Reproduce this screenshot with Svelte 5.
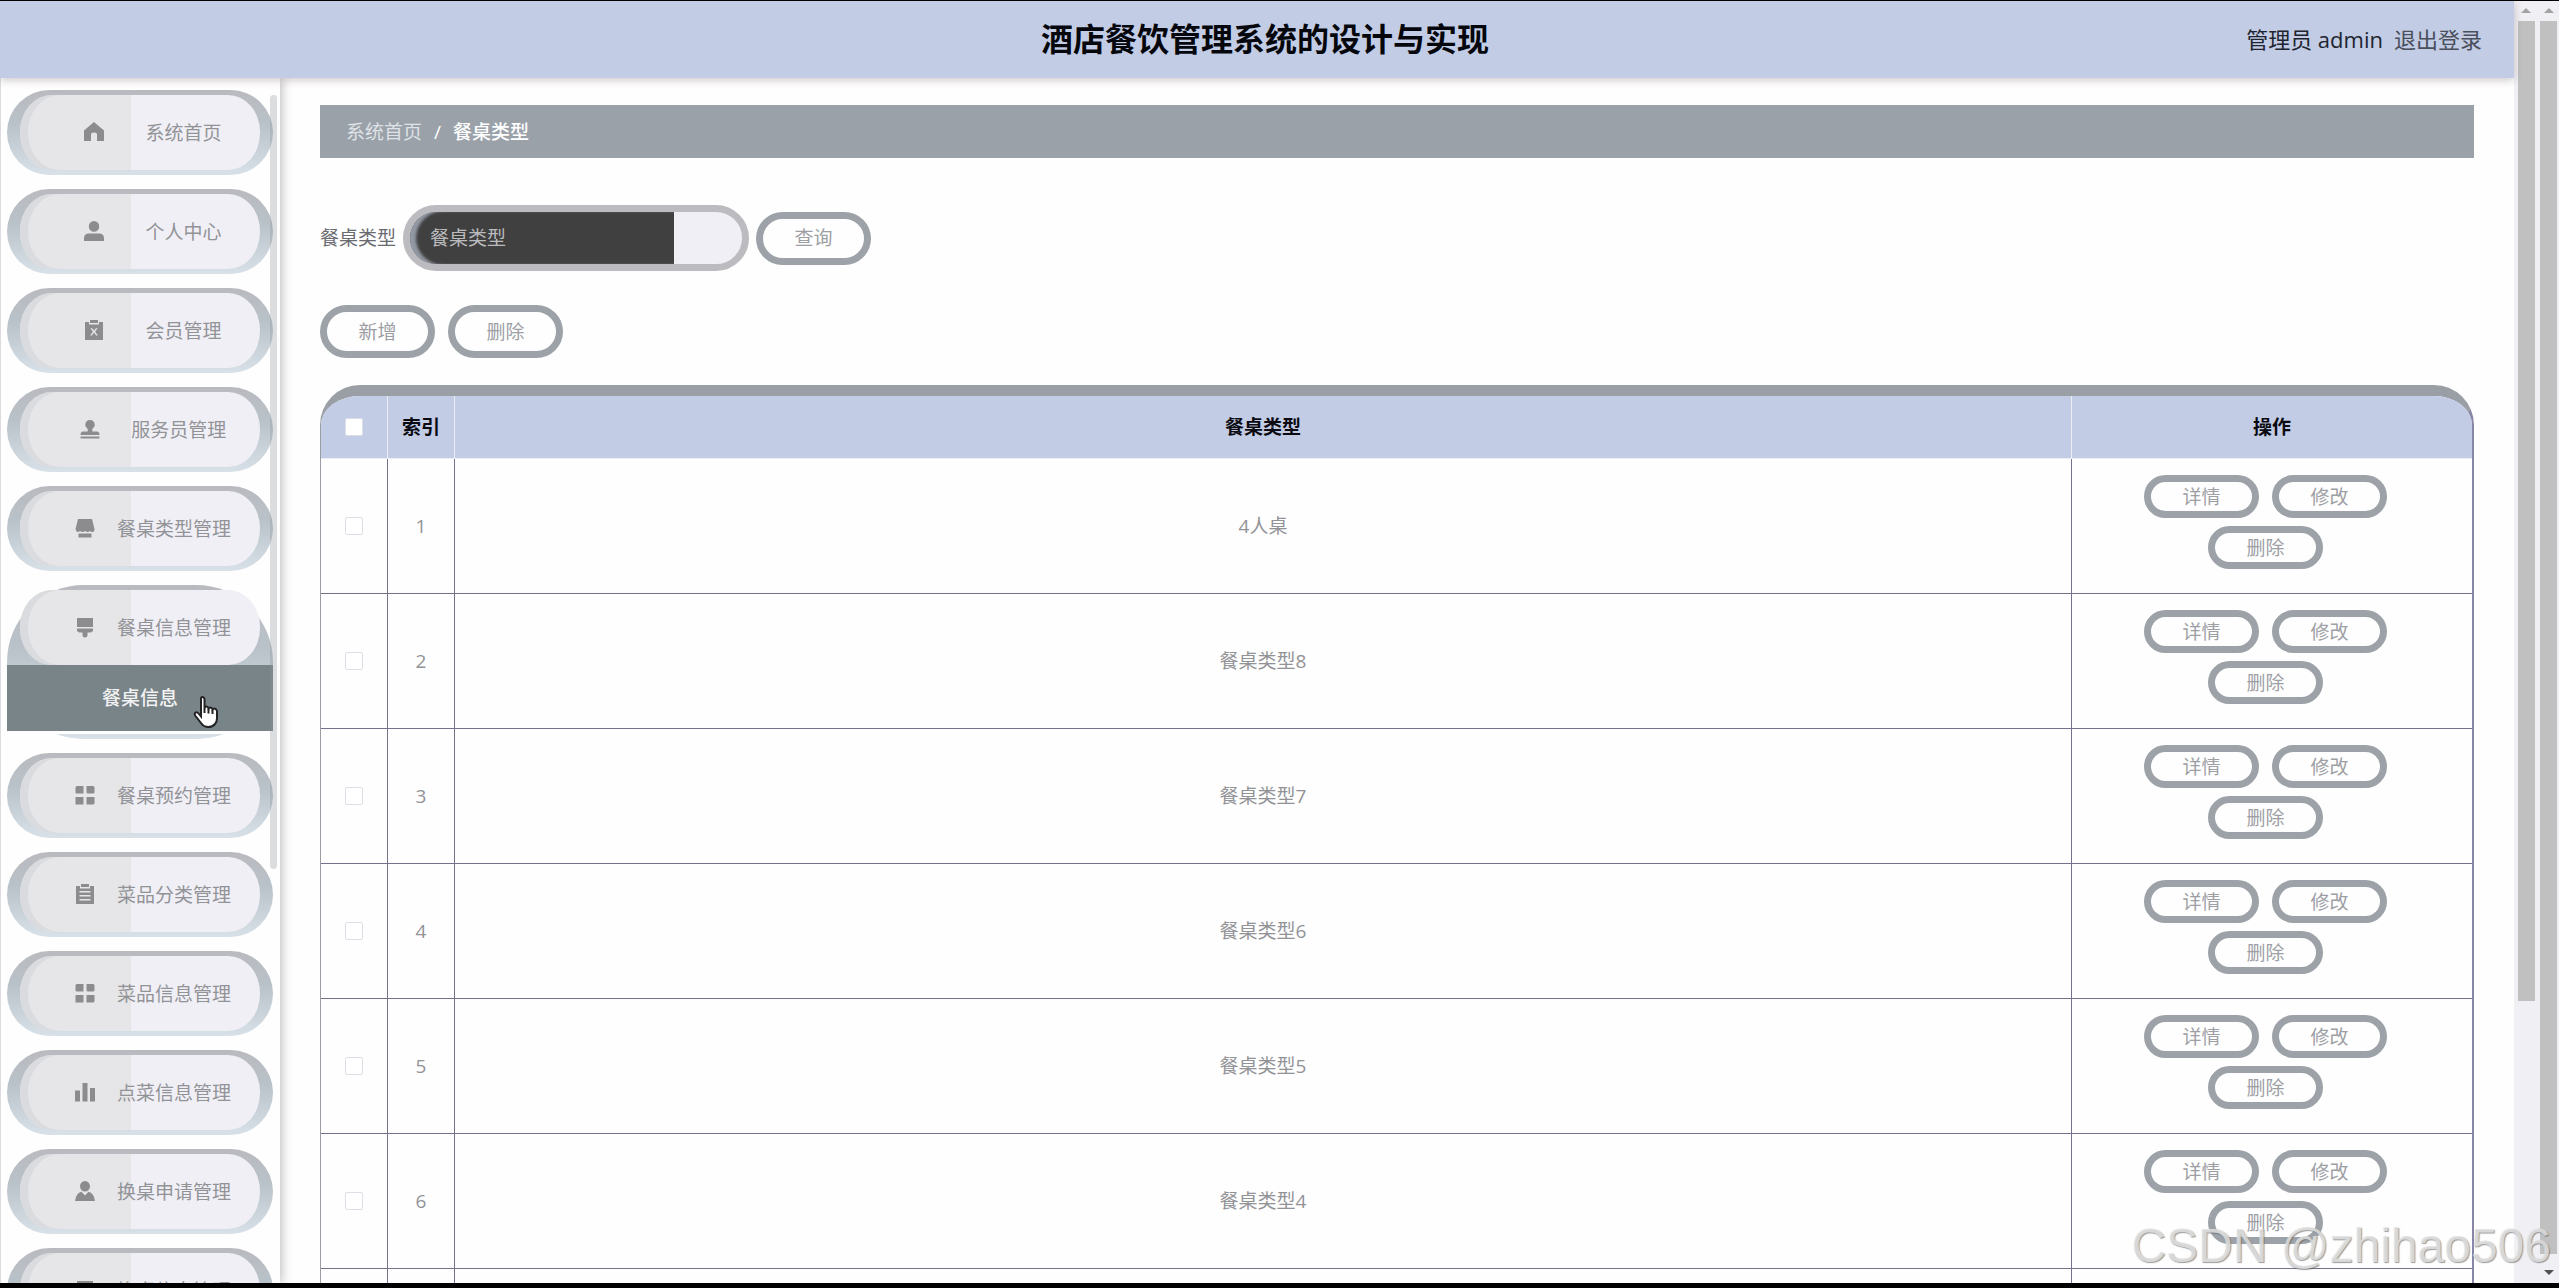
<script>
	let keyword = $state('');

	const menu = [
		{ name: '系统首页', icon: 'home' },
		{ name: '个人中心', icon: 'user' },
		{ name: '会员管理', icon: 'release' },
		{ name: '服务员管理', icon: 'stamp' },
		{ name: '餐桌类型管理', icon: 'shop' },
		{ name: '餐桌信息管理', icon: 'brush', children: ['餐桌信息'] },
		{ name: '餐桌预约管理', icon: 'grid' },
		{ name: '菜品分类管理', icon: 'order' },
		{ name: '菜品信息管理', icon: 'grid' },
		{ name: '点菜信息管理', icon: 'data' },
		{ name: '换桌申请管理', icon: 'custom' },
		{ name: '换桌信息管理', icon: 'brush' }
	];

	const icons = {
		home: 'M10 0L0 8.6V19H7V12.5Q7 10.5 10 10.5T13 12.5V19H20V8.6Z',
		user: 'M10 0a5.2 5.4 0 0 1 0 10.8a5.2 5.4 0 0 1 0-10.8zM0 20V17.5Q0 12.5 5 12.5H15Q20 12.5 20 17.5V20Z',
		release: 'M1 2H5V4.5H15V2H19V20H1ZM6 0H14V3H6ZM6.4 8.2L8.9 11.6L6.2 15.4H7.9L10 12.6L12.1 15.4H13.8L11.1 11.6L13.6 8.2H11.9L10 10.6L8.1 8.2Z',
		stamp: 'M10 1a4.5 4.5 0 0 1 3 8q-1.5 1.5-.5 3.500H17Q19.500 12.500 19.500 16H.5Q.5 12.500 3 12.500H7.500q1-2-.5-3.500a4.500 4.500 0 0 1 3-8zM.5 17.500H19.500V19.500H.5Z',
		shop: 'M3 1H17L19.500 11Q19.500 14 17.500 14T15 13Q12.500 15 10 13Q7.500 15 5 13Q4 14 2.500 14T.5 11ZM3.500 15.500H16.500V19.500H3.500Z',
		brush: 'M2 1H18V10H2ZM2 11.500H18V14L16 15.500H12.500V18.500Q12.500 20.500 10 20.500T7.500 18.500V15.500H4L2 14Z',
		grid: 'M2 1H8.500V8.500H1.500Q.5 8.500 .5 7.500V2.500Q.5 1 2 1ZM11.500 1H18Q19.500 1 19.500 2.500V7Q19.500 8.500 18 8.500H13Q11.500 8.500 11.500 7ZM.5 12H8.500V19.500H.5ZM11.500 12H19.500V18Q19.500 19.500 18 19.500H11.500Z',
		order: 'M1 2H5V4.500H15V2H19V20H1ZM6 0H14V3H6ZM4.500 7V8.500H15.500V7ZM4.500 11V12.500H15.500V11ZM4.500 15V16.500H15.500V15Z',
		data: 'M0 8.500H5V19.500H0ZM7.500 1H12.500V19.500H7.500ZM15 6H20V19.500H15Z',
		custom: 'M10 0a5 5.200 0 0 1 0 10.400a5 5.200 0 0 1 0-10.400zM0 20Q1 12 6.500 10.800L10 14.500L13.500 10.800Q19 12 20 20Z'
	};

	const rows = [
		'4人桌',
		'餐桌类型8',
		'餐桌类型7',
		'餐桌类型6',
		'餐桌类型5',
		'餐桌类型4',
		'餐桌类型3'
	];
</script>

<div class="page">
	<div class="window">
		<header>
			<h1>酒店餐饮管理系统的设计与实现</h1>
			<div class="account">
				<span>管理员 admin</span>
				<a href="#logout">退出登录</a>
			</div>
		</header>

		<div class="body">
			<nav>
				<ul class="menu">
					{#each menu as item}
						<li class="item">
							<a class="title" href="#menu">
								<svg viewBox="0 0 20 21" width="20" height="21" aria-hidden="true">
									<path d={icons[item.icon]} fill-rule="evenodd" />
								</svg>
								<span>{item.name}</span>
							</a>
							{#if item.children}
								<ul class="submenu">
									{#each item.children as child}
										<li><a href="#submenu">{child}</a></li>
									{/each}
								</ul>
								<svg class="pointer" viewBox="0 0 26 32" width="26" height="32" aria-hidden="true">
									<path d="M8 3Q8 1 9.500 1T11.500 3V12Q12 10.500 13.500 10.500T15.500 12.500Q16 11.500 17.500 11.500T19.500 13.500Q20 12.500 21.500 12.500T24 15V22Q24 26 22 28Q19.500 31 15.500 31Q10.500 31 8 27L2.500 20Q1 17.500 2.500 16.500T6 18L8 20.500Z" />
									<path class="fingers" d="M11.500 12V17M15.500 13V17.500M19.500 14V18" />
								</svg>
							{/if}
						</li>
					{/each}
				</ul>
				<div class="nav-thumb"></div>
			</nav>

			<main>
				<div class="breadcrumb">
					<a href="#home">系统首页</a>
					<b>/</b>
					<b>餐桌类型</b>
				</div>

				<form class="search">
					<label for="keyword">餐桌类型</label>
					<div class="field">
						<input id="keyword" type="text" placeholder="餐桌类型" bind:value={keyword}>
					</div>
					<button type="button">查询</button>
				</form>

				<div class="actions">
					<button type="button">新增</button>
					<button type="button">删除</button>
				</div>

				<div class="table-wrap">
					<table>
						<colgroup>
							<col class="narrow">
							<col class="narrow">
							<col>
							<col class="wide">
						</colgroup>
						<thead>
							<tr>
								<th><input type="checkbox" aria-label="全选"></th>
								<th>索引</th>
								<th>餐桌类型</th>
								<th>操作</th>
							</tr>
						</thead>
						<tbody>
							{#each rows as row, i}
								<tr>
									<td><input type="checkbox" aria-label={row}></td>
									<td>{i + 1}</td>
									<td>{row}</td>
									<td>
										<div class="ops">
											<button type="button">详情</button>
											<button type="button">修改</button>
											<button type="button">删除</button>
										</div>
									</td>
								</tr>
							{/each}
						</tbody>
					</table>
				</div>
			</main>
		</div>
	</div>

	<div class="scrollbar inner">
		<i class="up"></i>
		<div class="thumb"></div>
	</div>
	<div class="scrollbar">
		<i class="up"></i>
		<div class="thumb"></div>
		<i class="down"></i>
	</div>

	<div class="watermark">CSDN @zhihao506</div>
</div>

<style>
	:global(body) {
		background: #fefefe;
	}
	.page {
		display: flex;
		position: relative;
		height: 100vh;
		overflow: hidden;
		box-sizing: border-box;
		border-top: 1px solid #000;
		border-bottom: 5px solid #000;
		font: 19px/26px "Open Sans", "Noto Sans CJK SC", sans-serif;
		color: #929397;
	}
	.window {
		flex: 1;
		min-width: 0;
		display: flex;
		flex-direction: column;
	}
	a {
		color: inherit;
		text-decoration: none;
	}
	ul {
		margin: 0;
		padding: 0;
		list-style: none;
	}

	header {
		display: grid;
		grid-template-columns: 1fr auto 1fr;
		align-items: center;
		flex: none;
		height: 77px;
		box-sizing: border-box;
		padding: 0 32px 2px 48px;
		background: #c2cce5;
		box-shadow: 0 2px 8px rgba(60, 30, 50, .25);
		position: relative;
		z-index: 2;
	}
	h1 {
		grid-column: 2;
		margin: 0;
		font-size: 32px;
		line-height: 40px;
		font-weight: bold;
		color: #05070d;
	}
	.account {
		display: flex;
		justify-content: flex-end;
		gap: 11px;
		font-size: 22px;
		color: #20242f;
	}
	.account a {
		color: #4a4f5c;
	}

	.body {
		flex: 1;
		min-height: 0;
		display: flex;
	}
	nav {
		flex: none;
		position: relative;
		width: 280px;
		box-sizing: border-box;
		padding: 12px 7px 0 6px;
		border-left: 1px solid #dcdce0;
		box-shadow: 2px 0 10px rgba(0, 0, 0, .25);
	}
	.menu {
		display: flex;
		flex-direction: column;
		gap: 14px;
	}
	.item {
		position: relative;
		box-sizing: border-box;
		padding: 5px 13px;
		border-radius: 77px;
		background: linear-gradient(#b9babf, #b9c2c9 40%, #d8e0e8);
	}
	.title {
		display: flex;
		align-items: center;
		justify-content: space-around;
		height: 75px;
		box-sizing: border-box;
		padding: 0 18px 0 44px;
		border-radius: 32px / 37px;
		background: linear-gradient(to right, #e6e6e9 111px, #f0eff6 111px);
		box-shadow: inset 8px 0 0 #dadbdf;
	}
	.title svg {
		flex: none;
		fill: #8c8c8f;
	}
	.submenu {
		margin: 0 -13px;
		border-bottom: 3px solid #fefefe;
	}
	.submenu a {
		display: block;
		line-height: 66px;
		text-align: center;
		color: #f2f2f2;
		font-weight: 500;
		background: #798489;
	}
	.pointer {
		position: absolute;
		right: 54px;
		bottom: 11px;
		fill: #fff;
		stroke: #222;
		stroke-width: 2;
	}
	.fingers {
		fill: none;
	}
	.nav-thumb {
		position: absolute;
		top: 17px;
		right: 3px;
		width: 7px;
		height: 774px;
		border-radius: 4px;
		background: rgba(144, 147, 153, .3);
	}

	main {
		flex: 1;
		min-width: 0;
		padding: 27px 40px 0;
	}
	.breadcrumb {
		display: flex;
		align-items: center;
		gap: 12px;
		height: 53px;
		box-sizing: border-box;
		padding: 0 26px;
		background: #9aa1a9;
		color: #fff;
	}
	.breadcrumb a {
		color: #dfe2e6;
	}
	.breadcrumb b {
		font-weight: 500;
	}
	.search {
		display: flex;
		align-items: center;
		gap: 7px;
		margin-top: 47px;
	}
	.search label {
		color: #6a6b70;
	}
	.field {
		width: 346px;
		height: 66px;
		box-sizing: border-box;
		border: 7px solid #bcbcc0;
		border-radius: 33px;
		background: #f0eff6;
	}
	.field input {
		display: block;
		width: 264px;
		height: 52px;
		box-sizing: border-box;
		padding: 0 20px;
		border: 0;
		border-radius: 26px 0 0 26px;
		outline: none;
		background: #404040;
		box-shadow: inset 7px 0 3px -1px #9299a4;
		color: #c4c4c6;
		font: inherit;
	}
	.field input::placeholder {
		color: #bbbbbe;
	}
	button {
		width: 115px;
		height: 53px;
		padding: 0;
		border: 7px solid #9ca2a8;
		border-radius: 27px;
		background: #fefefe;
		color: #9d9fa4;
		font: inherit;
	}
	.actions {
		display: flex;
		gap: 13px;
		margin-top: 34px;
	}

	.table-wrap {
		margin-top: 27px;
		overflow: hidden;
		border: solid #9a9fa5;
		border-width: 11px 2px 0 1px;
		border-right-color: #8886a6;
		border-radius: 40px 40px 0 0;
	}
	table {
		width: 100%;
		table-layout: fixed;
		border-collapse: separate;
		border-spacing: 0;
		text-align: center;
	}
	.narrow {
		width: 67px;
	}
	.wide {
		width: 400px;
	}
	th {
		height: 62px;
		padding: 0;
		border-right: 1px solid #ebeef5;
		border-bottom: 1px solid #ebeef5;
		background: #c2cce5;
		color: #0a0a10;
	}
	td {
		padding: 0;
		border-right: 1px solid #73728a;
		border-bottom: 1px solid #73728a;
	}
	th:last-child, td:last-child {
		border-right: 0;
	}
	input[type="checkbox"] {
		appearance: none;
		display: block;
		width: 18px;
		height: 18px;
		margin: 0 auto;
		border: 1px solid #dcdfe6;
		border-radius: 2px;
		background: #fff;
	}
	.ops {
		display: flex;
		flex-wrap: wrap;
		justify-content: center;
		padding: 16px 13px;
	}
	.ops button {
		height: 43px;
		margin: 0 13px 8px 0;
	}

	.scrollbar {
		display: flex;
		flex-direction: column;
		align-items: center;
		flex: none;
		width: 21px;
		background: #f0eff3;
	}
	.scrollbar.inner {
		width: 24px;
	}
	.thumb {
		width: 17px;
		height: 1233px;
		background: #c0c0c0;
	}
	.inner .thumb {
		height: 980px;
	}
	.scrollbar i {
		border: 5px solid transparent;
	}
	.scrollbar .up {
		margin: 2px 0 8px;
		border-bottom-color: #a3a3a3;
	}
	.scrollbar .down {
		margin-top: 16px;
		border-top-color: #505050;
	}
	.watermark {
		position: absolute;
		right: 8px;
		bottom: 9px;
		z-index: 3;
		font: 48px/56px "Liberation Sans", sans-serif;
		color: rgba(226, 226, 226, .85);
		text-shadow: 1px 1px 1px rgba(90, 90, 90, .6);
	}
</style>
